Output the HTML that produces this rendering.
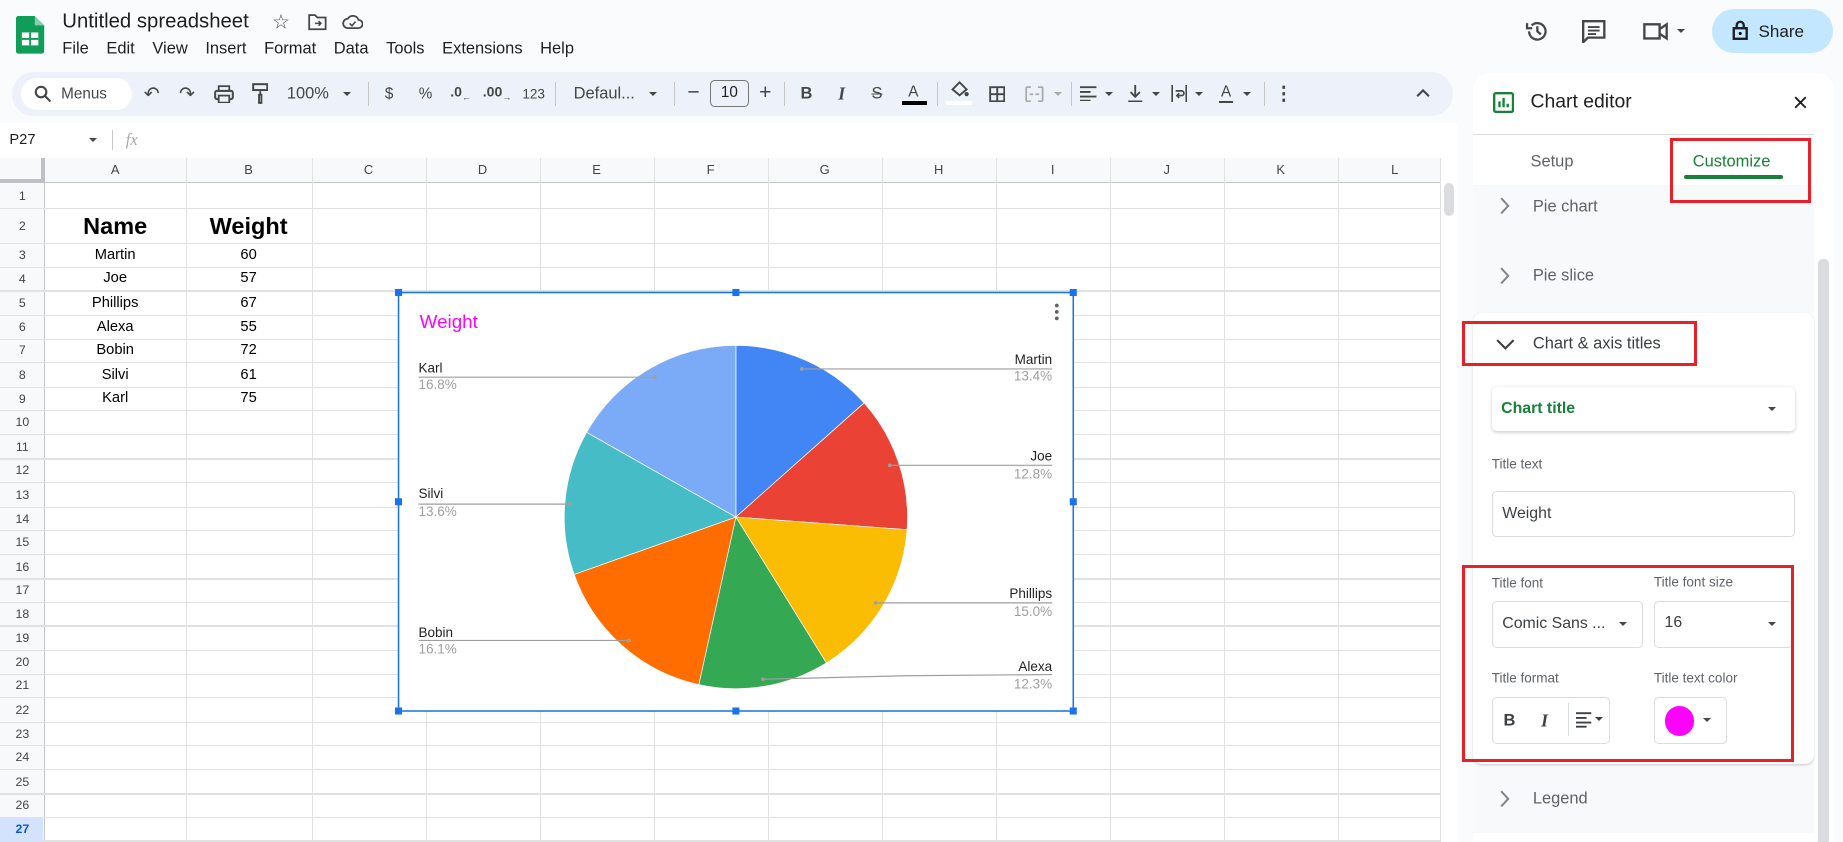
<!DOCTYPE html>
<html><head><meta charset="utf-8">
<style>
*{box-sizing:border-box;margin:0;padding:0}
body{width:1843px;height:841px;overflow:hidden;background:#f9fbfd;font-family:"Liberation Sans",Arial,sans-serif;color:#1f1f1f}
#w{zoom:1.1755;width:1568px;height:716px;position:relative;overflow:hidden}
.a{position:absolute}
.t{position:absolute;white-space:nowrap;transform:translateY(-50%)}
.ic{position:absolute;transform:translate(-50%,-50%);color:#444746;font-size:13px;white-space:nowrap}
.sep{position:absolute;width:1px;height:20px;background:#c7c7c7;top:70px}
.lbl{font-size:11.5px;color:#5f6368}
.box{position:absolute;border:1px solid #dadce0;border-radius:4px;background:#fff}
.caret{position:absolute;width:0;height:0;border-left:4px solid transparent;border-right:4px solid transparent;border-top:4px solid #444746}
.red{position:absolute;border:3px solid #e8202a}
.menu span{margin-right:15px}
</style></head><body><div id="w">

<svg class="a" style="left:14px;top:14px" width="24" height="32" viewBox="0 0 24 32"><path d="M2 0h14l8 8v22a2 2 0 0 1-2 2H2a2 2 0 0 1-2-2V2a2 2 0 0 1 2-2z" fill="#0f9d58"/><path d="M16 0v8h8z" fill="#87ceac"/><rect x="5" y="14" width="14" height="11" fill="#fff"/><path d="M5 19.5h14M12 14v11" stroke="#0f9d58" stroke-width="1.6"/></svg>
<div class="t" style="left:53px;top:19px;font-size:17.3px;color:#1f1f1f">Untitled spreadsheet</div>
<div class="ic" style="left:239px;top:19px;font-size:17px">☆</div>
<svg class="a" style="left:262px;top:12px" width="16" height="14" viewBox="0 0 16 14"><path d="M1 1h5l2 2h7v10H1z" fill="none" stroke="#444746" stroke-width="1.5"/><path d="M6 8h5M9 6l2 2-2 2" stroke="#444746" stroke-width="1.3" fill="none"/></svg>
<svg class="a" style="left:291px;top:12px" width="18" height="13" viewBox="0 0 18 13"><path d="M5 12a4 4 0 0 1 0-8 5 5 0 0 1 9 1 3.5 3.5 0 0 1 0 7z" fill="none" stroke="#444746" stroke-width="1.5"/><path d="M6.5 8l2 2 3-3.5" stroke="#444746" stroke-width="1.3" fill="none"/></svg>
<div class="t menu" style="left:53px;top:42px;font-size:14px"><span>File</span><span>Edit</span><span>View</span><span>Insert</span><span>Format</span><span>Data</span><span>Tools</span><span>Extensions</span><span>Help</span></div>

<svg class="a" style="left:1297px;top:16px" width="21" height="21" viewBox="0 0 24 24"><path d="M4 12a8 8 0 1 0 2.5-5.8" fill="none" stroke="#444746" stroke-width="2.2"/><path d="M2 4v5h5" fill="none" stroke="#444746" stroke-width="2.2"/><path d="M12 7v5l3.5 3" fill="none" stroke="#444746" stroke-width="2.2"/></svg>
<svg class="a" style="left:1346px;top:17px" width="20" height="20" viewBox="0 0 20 20"><path d="M1 1h18v14H5l-4 4z" fill="none" stroke="#444746" stroke-width="2"/><path d="M5 6h10M5 9h10M5 12h7" stroke="#444746" stroke-width="1.6"/></svg>
<svg class="a" style="left:1397px;top:19px" width="24" height="16" viewBox="0 0 24 16"><path d="M2 2h13v12H2zM15 6l6-4v12l-6-4" fill="none" stroke="#444746" stroke-width="2"/></svg>
<div class="caret" style="left:1427px;top:25px"></div>
<div class="a" style="left:1456px;top:8px;width:103px;height:37px;border-radius:19px;background:#c2e7ff"></div>
<svg class="a" style="left:1473px;top:17px" width="14" height="17" viewBox="0 0 14 17"><rect x="1.5" y="7" width="11" height="9" fill="none" stroke="#1f1f1f" stroke-width="2"/><path d="M4 7V4.5a3 3 0 0 1 6 0V7" fill="none" stroke="#1f1f1f" stroke-width="2"/><circle cx="7" cy="11.5" r="1.3"/></svg>
<div class="t" style="left:1496px;top:27px;font-size:14.5px;color:#1f1f1f">Share</div>

<div class="a" style="left:10px;top:61px;width:1226px;height:38px;border-radius:19px;background:#edf2fa"></div>
<div class="a" style="left:18px;top:66px;width:94px;height:28px;border-radius:14px;background:#fff"></div>
<svg class="a" style="left:29px;top:72px" width="15" height="15" viewBox="0 0 15 15"><circle cx="6" cy="6" r="4.5" fill="none" stroke="#444746" stroke-width="1.8"/><path d="M9.5 9.5l4.5 4.5" stroke="#444746" stroke-width="1.8"/></svg>
<div class="t" style="left:52px;top:80px;font-size:13px;color:#444746">Menus</div>
<div class="ic" style="left:129px;top:80px;font-size:16px">↶</div>
<div class="ic" style="left:159px;top:80px;font-size:16px">↷</div>
<svg class="a" style="left:182px;top:72px" width="17" height="16" viewBox="0 0 17 16"><rect x="1" y="5" width="15" height="7" rx="1.5" fill="none" stroke="#444746" stroke-width="1.7"/><rect x="4" y="1" width="9" height="4" fill="none" stroke="#444746" stroke-width="1.5"/><rect x="4" y="9" width="9" height="6" fill="#edf2fa" stroke="#444746" stroke-width="1.5"/></svg>
<svg class="a" style="left:214px;top:71px" width="14" height="18" viewBox="0 0 14 18"><rect x="1" y="1" width="12" height="5" fill="none" stroke="#444746" stroke-width="1.7"/><path d="M7 7v3M6 10h2v7H6z" fill="none" stroke="#444746" stroke-width="1.6"/></svg>
<div class="t" style="left:244px;top:80px;font-size:14px;color:#444746">100%</div>
<div class="caret" style="left:292px;top:78px"></div>
<div class="sep" style="left:313px"></div>
<div class="ic" style="left:331px;top:80px;font-size:13px">$</div>
<div class="ic" style="left:362px;top:80px;font-size:13px">%</div>
<div class="ic" style="left:392px;top:79px;font-size:12px;font-weight:bold">.0<sub style="font-size:8px">←</sub></div>
<div class="ic" style="left:423px;top:79px;font-size:12px;font-weight:bold">.00<sub style="font-size:8px">→</sub></div>
<div class="ic" style="left:454px;top:80px;font-size:11.5px">123</div>
<div class="sep" style="left:472px"></div>
<div class="t" style="left:488px;top:80px;font-size:14px;color:#444746">Defaul...</div>
<div class="caret" style="left:552px;top:78px"></div>
<div class="sep" style="left:573px"></div>
<div class="ic" style="left:590px;top:79px;font-size:18px">−</div>
<div class="a" style="left:604px;top:68px;width:33px;height:23px;border:1px solid #747775;border-radius:4px;font-size:13px;text-align:center;line-height:21px;color:#1f1f1f">10</div>
<div class="ic" style="left:651px;top:79px;font-size:18px">+</div>
<div class="sep" style="left:667px"></div>
<div class="ic" style="left:686px;top:80px;font-size:14px;font-weight:bold">B</div>
<div class="ic" style="left:716px;top:80px;font-size:15px;font-style:italic;font-family:'Liberation Serif',serif;font-weight:bold">I</div>
<div class="ic" style="left:746px;top:80px;font-size:14px;text-decoration:line-through">S</div>
<div class="ic" style="left:777px;top:78px;font-size:13px">A</div>
<div class="a" style="left:767px;top:86px;width:22px;height:3px;background:#000"></div>
<div class="sep" style="left:797px"></div>
<svg class="a" style="left:807px;top:68px" width="18" height="16" viewBox="0 0 18 16"><path d="M3 8l6-6 6 6-6 5z" fill="none" stroke="#444746" stroke-width="1.6"/><circle cx="15" cy="12" r="1.8" fill="#444746"/></svg>
<div class="a" style="left:805px;top:86px;width:22px;height:3px;background:#fff"></div>
<svg class="a" style="left:841px;top:73px" width="14" height="14" viewBox="0 0 14 14"><path d="M1 1h12v12H1zM7 1v12M1 7h12" fill="none" stroke="#444746" stroke-width="1.6"/></svg>
<svg class="a" style="left:872px;top:73px" width="16" height="14" viewBox="0 0 16 14"><path d="M1 1h4M1 13h4M11 1h4M11 13h4M1 1v12M15 1v12M4 7h3M12 7H9" fill="none" stroke="#aaa" stroke-width="1.5"/></svg>
<div class="caret" style="left:897px;top:78px;border-top-color:#aaa"></div>
<div class="sep" style="left:911px"></div>
<svg class="a" style="left:919px;top:73px" width="14" height="13" viewBox="0 0 14 13"><path d="M0 1h14M0 5h9M0 9h14M0 12.5h9" stroke="#444746" stroke-width="1.6"/></svg>
<div class="caret" style="left:940px;top:78px"></div>
<svg class="a" style="left:959px;top:72px" width="14" height="15" viewBox="0 0 14 15"><path d="M7 0v10M3 6l4 4 4-4M1 14h12" fill="none" stroke="#444746" stroke-width="1.6"/></svg>
<div class="caret" style="left:980px;top:78px"></div>
<svg class="a" style="left:996px;top:72px" width="14" height="15" viewBox="0 0 14 15"><path d="M1 0v15M13 0v15M4 5h5a2 2 0 0 1 0 4H6M7 7l-2 2 2 2" fill="none" stroke="#444746" stroke-width="1.4"/></svg>
<div class="caret" style="left:1017px;top:78px"></div>
<div class="ic" style="left:1043px;top:78px;font-size:13px">A</div>
<div class="a" style="left:1037px;top:86px;width:12px;height:1.5px;background:#444746"></div>
<div class="caret" style="left:1057px;top:78px"></div>
<div class="sep" style="left:1075px"></div>
<div class="ic" style="left:1092px;top:80px;font-size:16px;font-weight:bold">⋮</div>
<svg class="a" style="left:1205px;top:75px" width="12" height="8" viewBox="0 0 12 8"><path d="M1 7l5-5 5 5" fill="none" stroke="#444746" stroke-width="1.8"/></svg>

<div class="a" style="left:0;top:105px;width:1240px;height:29px;background:#fff"></div>
<div class="t" style="left:8px;top:119px;font-size:12.5px">P27</div>
<div class="caret" style="left:76px;top:117px"></div>
<div class="a" style="left:95px;top:111px;width:1px;height:17px;background:#c7c7c7"></div>
<div class="t" style="left:107px;top:119px;font-size:14px;color:#aaa;font-style:italic;font-family:'Liberation Serif',serif">fx</div>

<div id="grid" class="a" style="left:0;top:134px;width:1225px;height:582px;background:#fff;overflow:hidden"></div>
<div class="a" style="left:1225px;top:134px;width:15px;height:582px;background:#fff;border-left:1px solid #e1e1e1"></div>
<div class="a" style="left:1228px;top:156px;width:9px;height:28px;border-radius:5px;background:#dadce0"></div>

<svg class="a" style="left:336px;top:246px" width="580" height="362" id="chart"></svg>

<div class="a" style="left:1253px;top:62px;width:307px;height:660px;background:#fff;border-radius:14px 14px 0 0"></div>
<svg class="a" style="left:1270px;top:78px" width="18" height="18" viewBox="0 0 18 18"><rect x="1" y="1" width="16" height="16" rx="1.5" fill="none" stroke="#188038" stroke-width="2"/><path d="M5.5 13V8M9 13V5M12.5 13v-3" stroke="#188038" stroke-width="2"/></svg>
<div class="t" style="left:1302px;top:87px;font-size:16.5px;color:#1f1f1f">Chart editor</div>
<svg class="a" style="left:1526px;top:82px" width="11" height="11" viewBox="0 0 11 11"><path d="M1 1l9 9M10 1l-9 9" stroke="#1f1f1f" stroke-width="1.6"/></svg>
<div class="a" style="left:1253px;top:114px;width:290px;height:1px;background:#dadce0"></div>
<div class="t" style="left:1302px;top:138px;font-size:14px;color:#5f6368">Setup</div>
<div class="t" style="left:1440px;top:138px;font-size:14px;color:#188038">Customize</div>
<div class="a" style="left:1433px;top:149px;width:84px;height:3px;background:#188038;border-radius:2px"></div>
<div class="a" style="left:1253px;top:157px;width:290px;height:552px;background:#f8f9fa"></div>
<div class="a" style="left:1547px;top:220px;width:9px;height:500px;background:#dadce0;border-radius:4px 4px 0 0"></div>
<svg class="a" style="left:1276px;top:168px" width="9" height="15" viewBox="0 0 9 15"><path d="M1 1l6 6.5L1 14" fill="none" stroke="#80868b" stroke-width="1.7"/></svg>
<div class="t" style="left:1304px;top:176px;font-size:14px;color:#5f6368">Pie chart</div>
<svg class="a" style="left:1276px;top:227px" width="9" height="15" viewBox="0 0 9 15"><path d="M1 1l6 6.5L1 14" fill="none" stroke="#80868b" stroke-width="1.7"/></svg>
<div class="t" style="left:1304px;top:235px;font-size:14px;color:#5f6368">Pie slice</div>
<div class="a" style="left:1253px;top:266px;width:290px;height:384px;background:#fff;border-radius:8px;box-shadow:0 1px 2px rgba(0,0,0,.15)"></div>
<svg class="a" style="left:1273px;top:288px" width="16" height="10" viewBox="0 0 16 10"><path d="M1 1l7 7 7-7" fill="none" stroke="#3c4043" stroke-width="1.8"/></svg>
<div class="t" style="left:1304px;top:293px;font-size:14px;color:#3c4043">Chart &amp; axis titles</div>
<div class="box" style="left:1269px;top:329px;width:258px;height:38px;border:none;box-shadow:0 1px 3px rgba(0,0,0,.2)"></div>
<div class="t" style="left:1277px;top:348px;font-size:13.5px;color:#188038;font-weight:bold">Chart title</div>
<div class="caret" style="left:1504px;top:346px"></div>
<div class="t lbl" style="left:1269px;top:395px">Title text</div>
<div class="box" style="left:1269px;top:418px;width:258px;height:39px"></div>
<div class="t" style="left:1278px;top:437px;font-size:13.5px;color:#3c4043">Weight</div>
<div class="t lbl" style="left:1269px;top:496px">Title font</div>
<div class="t lbl" style="left:1407px;top:495px">Title font size</div>
<div class="box" style="left:1269px;top:511px;width:129px;height:40px"></div>
<div class="t" style="left:1278px;top:531px;font-size:13.5px;color:#3c4043">Comic Sans ...</div>
<div class="caret" style="left:1377px;top:529px"></div>
<div class="box" style="left:1407px;top:511px;width:118px;height:40px"></div>
<div class="t" style="left:1416px;top:530px;font-size:13.5px;color:#3c4043">16</div>
<div class="caret" style="left:1504px;top:529px"></div>
<div class="t lbl" style="left:1269px;top:577px">Title format</div>
<div class="t lbl" style="left:1407px;top:577px">Title text color</div>
<div class="box" style="left:1269px;top:593px;width:101px;height:40px"></div>
<div class="t" style="left:1279px;top:613px;font-size:14px;color:#3c4043;font-weight:bold">B</div>
<div class="t" style="left:1311px;top:613px;font-size:15px;color:#3c4043;font-weight:bold;font-style:italic;font-family:'Liberation Serif',serif">I</div>
<div class="a" style="left:1334px;top:598px;width:1px;height:28px;background:#dadce0"></div>
<svg class="a" style="left:1341px;top:606px" width="14" height="13" viewBox="0 0 14 13"><path d="M0 1h13M0 5h9M0 9h13M0 12.5h9" stroke="#3c4043" stroke-width="1.6"/></svg>
<div class="caret" style="left:1357px;top:610px;border-top-color:#3c4043"></div>
<div class="box" style="left:1407px;top:593px;width:62px;height:40px"></div>
<div class="a" style="left:1416px;top:601px;width:25px;height:25px;border-radius:50%;background:#ff00ff"></div>
<div class="caret" style="left:1449px;top:611px"></div>
<svg class="a" style="left:1276px;top:672px" width="9" height="15" viewBox="0 0 9 15"><path d="M1 1l6 6.5L1 14" fill="none" stroke="#80868b" stroke-width="1.7"/></svg>
<div class="t" style="left:1304px;top:680px;font-size:14px;color:#5f6368">Legend</div>

<div class="red" style="left:1421px;top:117px;width:120px;height:56px"></div>
<div class="red" style="left:1244px;top:273px;width:200px;height:38px"></div>
<div class="red" style="left:1244px;top:481px;width:282px;height:167px"></div>
</div>

<script>
const g=document.getElementById('grid');
const cols=[['',0,38],['A',38,158],['B',158,265]];
const L='CDEFGHIJKL';for(let i=0;i<10;i++)cols.push([L[i],265+97*i,362+97*i]);
const rows=[];let y=22;rows.push([1,y,21]);y+=21;rows.push([2,y,30]);y+=30;
for(let r=3;r<=27;r++){rows.push([r,Math.round(y),20.35]);y+=20.35;}
let h='';
h+='<div class="a" style="left:0;top:0;width:1225px;height:22px;background:#f8f9fa;border-bottom:1px solid #c4c7c5"></div>';
h+='<div class="a" style="left:0;top:0;width:38px;height:582px;background:#f8f9fa;border-right:1px solid #c4c7c5"></div>';
h+='<div class="a" style="left:0;top:0;width:38px;height:22px;border-right:4px solid #bdc1c6;border-bottom:4px solid #bdc1c6"></div>';
for(const c of cols.slice(1)){
 h+=`<div class="a" style="left:${c[2]}px;top:0;width:1px;height:582px;background:#e1e1e1"></div>`;
 h+=`<div class="a" style="left:${c[1]}px;top:4px;width:${c[2]-c[1]}px;text-align:center;font-size:11px;color:#444">${c[0]}</div>`;
}
for(const r of rows){
 const top=Math.round(r[1]+r[2]);
 h+=`<div class="a" style="left:0;top:${top}px;width:1225px;height:1px;background:#e1e1e1"></div>`;
 const sel=r[0]==27;
 if(sel)h+=`<div class="a" style="left:0;top:${r[1]+1}px;width:37px;height:${r[2]}px;background:#d3e3fd"></div>`;
 h+=`<div class="a" style="left:0;top:${r[1]+r[2]/2-6}px;width:38px;text-align:center;font-size:10.5px;color:${sel?'#0b57d0':'#444'};${sel?'font-weight:bold':''}">${r[0]}</div>`;
}
const data=[['Martin',60],['Joe',57],['Phillips',67],['Alexa',55],['Bobin',72],['Silvi',61],['Karl',75]];
h+=`<div class="a" style="left:38px;top:47px;width:120px;text-align:center;font-size:20px;font-weight:bold;color:#000">Name</div>`;
h+=`<div class="a" style="left:158px;top:47px;width:107px;text-align:center;font-size:20px;font-weight:bold;color:#000">Weight</div>`;
data.forEach((d,i)=>{const ry=rows[i+2][1]+3;
 h+=`<div class="a" style="left:38px;top:${ry}px;width:120px;text-align:center;font-size:12.5px;color:#000">${d[0]}</div>`;
 h+=`<div class="a" style="left:158px;top:${ry}px;width:107px;text-align:center;font-size:12.5px;color:#000">${d[1]}</div>`;});
g.innerHTML=h;

const s=document.getElementById('chart');
const ox=336,oy=246;
let c='<rect x="3" y="3" width="574" height="356" fill="#fff" stroke="#1a73e8" stroke-width="1.3"/>';
const cx=626-ox,cy=440-oy,R=146;
const cl=['#4285f4','#ea4335','#fbbc04','#34a853','#ff6d01','#46bdc6','#7baaf7'];
const tot=447;let a=0;
data.forEach((d,i)=>{const a2=a+d[1]/tot*2*Math.PI;
 const p=t=>[cx+R*Math.sin(t),cy-R*Math.cos(t)];
 const [x1,y1]=p(a),[x2,y2]=p(a2);
 c+=`<path d="M${cx} ${cy}L${x1} ${y1}A${R} ${R} 0 0 1 ${x2} ${y2}Z" fill="${cl[i]}" stroke="#fff" stroke-width="0.6"/>`;a=a2;});
c+=`<text x="${357-ox}" y="${279-oy}" font-size="16" fill="#ff00ff" font-family="'Comic Sans MS','Liberation Sans',cursive">Weight</text>`;
const lab=[
 ['Karl','16.8%',356,313,327,[[356,321],[557,321]],'start'],
 ['Martin','13.4%',895,306,320,[[682,314],[895,314]],'end'],
 ['Joe','12.8%',895,388,403,[[757,396],[895,396]],'end'],
 ['Silvi','13.6%',356,420,435,[[356,429],[485,429]],'start'],
 ['Phillips','15.0%',895,505,520,[[745,513],[895,513]],'end'],
 ['Bobin','16.1%',356,538,552,[[356,545],[535,545]],'start'],
 ['Alexa','12.3%',895,567,582,[[649,578],[770,575],[895,574]],'end']];
for(const l of lab){
 c+=`<polyline points="${l[5].map(p=>(p[0]-ox)+','+(p[1]-oy)).join(' ')}" fill="none" stroke="#9e9e9e" stroke-width="1"/>`;
 const e=l[6]=='start'?l[5][l[5].length-1]:l[5][0];
 c+=`<circle cx="${e[0]-ox}" cy="${e[1]-oy}" r="1.6" fill="#9e9e9e"/>`;
 c+=`<text x="${l[2]-ox}" y="${l[3]-oy+4}" font-size="11.5" fill="#222" text-anchor="${l[6]}" font-family="Liberation Sans,Arial,sans-serif">${l[0]}</text>`;
 c+=`<text x="${l[2]-ox}" y="${l[4]-oy+4}" font-size="11.5" fill="#9e9e9e" text-anchor="${l[6]}" font-family="Liberation Sans,Arial,sans-serif">${l[1]}</text>`;
}
c+='<circle cx="563" cy="14" r="1.6" fill="#5f6368"/><circle cx="563" cy="19.5" r="1.6" fill="#5f6368"/><circle cx="563" cy="25" r="1.6" fill="#5f6368"/>';
for(const [x,y] of [[3,3],[290,3],[577,3],[3,181],[577,181],[3,359],[290,359],[577,359]])
 c+=`<rect x="${x-3}" y="${y-3}" width="6" height="6" fill="#1a73e8"/>`;
s.innerHTML=c;
</script>
</body></html>
